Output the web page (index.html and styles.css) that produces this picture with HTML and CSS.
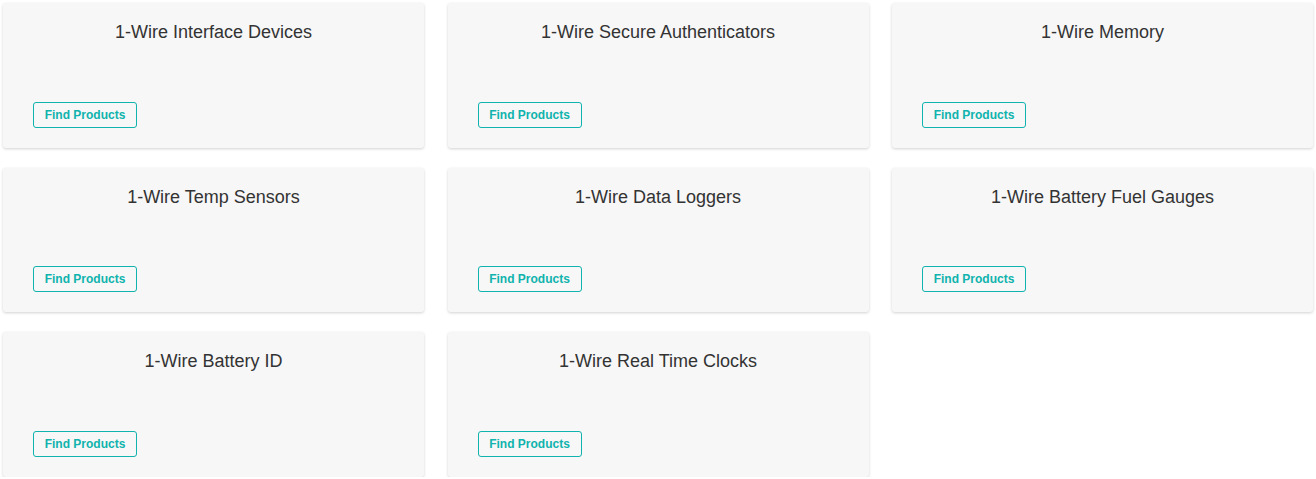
FILE: index.html
```html
<!DOCTYPE html>
<html>
<head>
<meta charset="utf-8">
<link rel="stylesheet" href="styles.css">
</head>
<body>
<div class="grid">
  <div class="card"><h3 class="title">1-Wire Interface Devices</h3><a class="btn">Find Products</a></div>
  <div class="card"><h3 class="title">1-Wire Secure Authenticators</h3><a class="btn">Find Products</a></div>
  <div class="card"><h3 class="title">1-Wire Memory</h3><a class="btn">Find Products</a></div>
  <div class="card"><h3 class="title">1-Wire Temp Sensors</h3><a class="btn">Find Products</a></div>
  <div class="card"><h3 class="title">1-Wire Data Loggers</h3><a class="btn">Find Products</a></div>
  <div class="card"><h3 class="title">1-Wire Battery Fuel Gauges</h3><a class="btn">Find Products</a></div>
  <div class="card"><h3 class="title">1-Wire Battery ID</h3><a class="btn">Find Products</a></div>
  <div class="card"><h3 class="title">1-Wire Real Time Clocks</h3><a class="btn">Find Products</a></div>
</div>
</body>
</html>
```
FILE: styles.css
```css
html, body {
  margin: 0;
  padding: 0;
  background: #ffffff;
  font-family: "Liberation Sans", Arial, sans-serif;
}
.grid {
  display: grid;
  grid-template-columns: repeat(3, 421px);
  column-gap: 23.5px;
  row-gap: 20px;
  padding: 3px 3px 0 3px;
}
.card {
  background: #f7f7f7;
  border-radius: 3px;
  box-shadow: 0 1px 3px rgba(0, 0, 0, 0.18);
  height: 144.5px;
  box-sizing: border-box;
  display: flex;
  flex-direction: column;
  align-items: flex-start;
  padding: 0 30px 20px 30px;
}
.title {
  align-self: stretch;
  text-align: center;
  margin: 18px 0 0 0;
  font-size: 18px;
  font-weight: normal;
  color: #333333;
  line-height: 22px;
  flex: 1;
}
.btn {
  display: inline-flex;
  align-items: center;
  justify-content: center;
  height: 26px;
  width: 104px;
  box-sizing: border-box;
  border: 1px solid #10b3ad;
  border-radius: 3px;
  color: #10b3ad;
  font-size: 12px;
  font-weight: bold;
  text-decoration: none;
}
```
